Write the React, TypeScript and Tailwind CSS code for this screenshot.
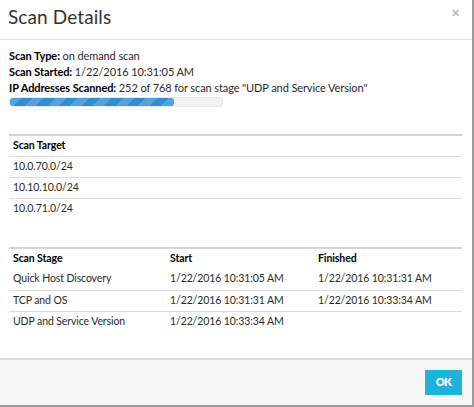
export default function App() {
  const targets = ["10.0.70.0/24", "10.10.10.0/24", "10.0.71.0/24"];
  const stages = [
    ["Quick Host Discovery", "1/22/2016 10:31:05 AM", "1/22/2016 10:31:31 AM"],
    ["TCP and OS", "1/22/2016 10:31:31 AM", "1/22/2016 10:33:34 AM"],
    ["UDP and Service Version", "1/22/2016 10:33:34 AM", ""],
  ];
  return (
    <div className="w-[474px] h-[407px] bg-white font-['Lato',sans-serif] text-[#2a2a2a] overflow-hidden">
      <div className="w-[472px] h-[405px] border-r-2 border-b-2 border-[#9a9a9a] box-content flex flex-col">
        <div className="h-[40px] flex items-center justify-between pl-[8px] pr-[12px] border-b border-[#e5e5e5]">
          <h2 className="text-[19px] leading-none text-[#333] font-['Lato',sans-serif] tracking-[0.1px] -mt-[6px]">
            Scan Details
          </h2>
          <span className="text-[#b8b8b8] text-[15px] font-bold -mt-[14px]">×</span>
        </div>

        <div className="flex-1 px-[9px] pt-[8px] text-[10.5px] tracking-[-0.1px]">
          <div className="leading-[16px] text-[11px]">
            <div>
              <b className="font-bold text-black">Scan Type:</b> on demand scan
            </div>
            <div>
              <b className="font-bold text-black">Scan Started:</b> 1/22/2016 10:31:05 AM
            </div>
            <div>
              <b className="font-bold text-black">IP Addresses Scanned:</b> 252 of 768 for scan stage "UDP and Service Version"
            </div>
          </div>
          <div className="mt-[1px] w-[214px] h-[10px] bg-[#f3f3f3] rounded-[3px] border border-[#e8e8e8] overflow-hidden">
            <div className="w-[164px] h-full rounded-[3px] bg-[#2d8fd8] bg-[repeating-linear-gradient(135deg,rgba(255,255,255,0.18)_0px,rgba(255,255,255,0.18)_8px,transparent_8px,transparent_16px)]" />
          </div>

          <table className="mt-[27px] w-[453px] border-t-2 border-[#d4d4d4]">
            <thead>
              <tr className="h-[21px] border-b border-[#ddd]">
                <th className="text-left font-bold text-black pl-[4px]">Scan Target</th>
              </tr>
            </thead>
            <tbody>
              {targets.map((t, i) => (
                <tr key={t} className={`h-[21px] ${i < targets.length - 1 ? "border-b border-[#ddd]" : ""}`}>
                  <td className="pl-[4px]">{t}</td>
                </tr>
              ))}
            </tbody>
          </table>

          <table className="mt-[28px] w-[453px] border-t-2 border-[#d4d4d4]">
            <thead>
              <tr className="h-[21px]">
                <th className="text-left font-bold text-black pl-[4px] w-[161px]">Scan Stage</th>
                <th className="text-left font-bold text-black w-[148px]">Start</th>
                <th className="text-left font-bold text-black">Finished</th>
              </tr>
            </thead>
            <tbody>
              {stages.map((s, i) => (
                <tr key={s[0]} className={`h-[21px] ${i < stages.length - 1 ? "border-b border-[#ddd]" : ""}`}>
                  <td className="pl-[4px]">{s[0]}</td>
                  <td>{s[1]}</td>
                  <td>{s[2]}</td>
                </tr>
              ))}
            </tbody>
          </table>
        </div>

        <div className="h-[47px] bg-[#f5f6f6] border-t-2 border-[#dcdcdc] flex items-center justify-end pr-[10px]">
          <button className="w-[37px] h-[25px] bg-[#1fb2dc] text-white text-[11px] font-extrabold tracking-[-0.5px]">
            OK
          </button>
        </div>
      </div>
    </div>
  );
}
